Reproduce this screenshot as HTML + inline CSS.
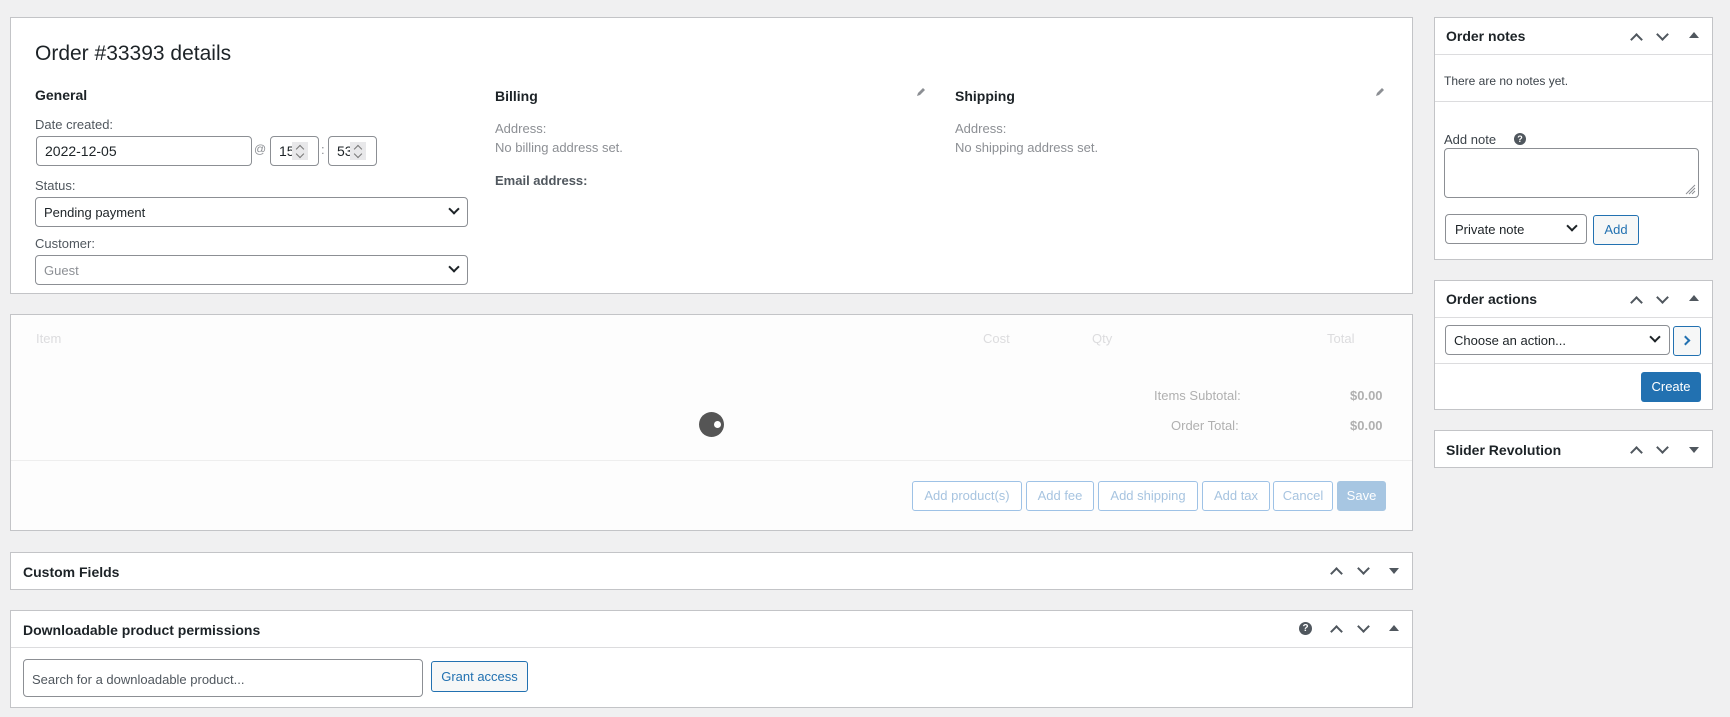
<!DOCTYPE html>
<html><head><meta charset="utf-8"><style>
*{box-sizing:border-box;margin:0;padding:0}
body{width:1730px;height:717px;background:#f0f0f1;font-family:"Liberation Sans",sans-serif;font-size:13px;color:#1d2327;position:relative;overflow:hidden}
.a{position:absolute}
.panel{position:absolute;background:#fff;border:1px solid #c3c4c7}
.t{position:absolute;white-space:nowrap;line-height:1}
.inp{position:absolute;border:1px solid #8c8f94;border-radius:4px;background:#fff}
.btn{position:absolute;border:1px solid #2271b1;border-radius:3px;background:#f6f7f7;color:#2271b1;text-align:center;font-size:13px}
.dbtn{position:absolute;border:1px solid #9ec2e6;border-radius:3px;background:#fff;color:#a7c4e0;text-align:center;font-size:13px;line-height:27px}
.chev{position:absolute;width:9px;height:9px;border-left:2px solid #50575e;border-top:2px solid #50575e}
.up{transform:rotate(45deg)}
.dn{transform:rotate(225deg)}
.tri-up{position:absolute;width:0;height:0;border-left:5px solid transparent;border-right:5px solid transparent;border-bottom:6px solid #50575e}
.tri-dn{position:absolute;width:0;height:0;border-left:5px solid transparent;border-right:5px solid transparent;border-top:6px solid #50575e}
.selchev{position:absolute;width:8px;height:8px;border-right:2px solid #1d2327;border-bottom:2px solid #1d2327;transform:rotate(45deg)}
.gray{color:#8c8f94}
.lbl{color:#50575e}
.spin{position:absolute;width:16px;height:18px;background:#e8e8ea}
.spin:before,.spin:after{content:"";position:absolute;left:5px;width:5px;height:5px;border-left:1px solid #777;border-top:1px solid #777}
.spin:before{top:4px;transform:rotate(45deg)}
.spin:after{top:9px;transform:rotate(225deg)}
</style></head><body>

<div class="panel" style="left:10px;top:17px;width:1403px;height:277px"></div>
<div class="t" style="left:35px;top:43px;font-size:21px;color:#1d2327">Order #33393 details</div>
<div class="t" style="left:35px;top:88px;font-size:14px;font-weight:bold">General</div>
<div class="t lbl" style="left:35px;top:118px">Date created:</div>
<div class="inp" style="left:36px;top:136px;width:216px;height:30px"></div>
<div class="t" style="left:45px;top:144px;font-size:14px">2022-12-05</div>
<div class="t gray" style="left:254px;top:143px;font-size:12px">@</div>
<div class="inp" style="left:270px;top:136px;width:49px;height:30px"></div>
<div class="t" style="left:279px;top:144px;font-size:14px">15</div>
<div class="spin" style="left:292px;top:142px"></div>
<div class="t gray" style="left:321px;top:143px">:</div>
<div class="inp" style="left:328px;top:136px;width:49px;height:30px"></div>
<div class="t" style="left:337px;top:144px;font-size:14px">53</div>
<div class="spin" style="left:350px;top:142px"></div>
<div class="t lbl" style="left:35px;top:179px">Status:</div>
<div class="inp" style="left:35px;top:197px;width:433px;height:30px"></div>
<div class="t" style="left:44px;top:206px;font-size:13px">Pending payment</div>
<div class="selchev" style="left:450px;top:205px"></div>
<div class="t lbl" style="left:35px;top:237px">Customer:</div>
<div class="inp" style="left:35px;top:255px;width:433px;height:30px"></div>
<div class="t gray" style="left:44px;top:264px">Guest</div>
<div class="selchev" style="left:450px;top:263px"></div>

<div class="t" style="left:495px;top:89px;font-size:14px;font-weight:bold">Billing</div>
<svg class="a" style="left:915px;top:86px" width="12" height="12" viewBox="0 0 12 12"><path d="M2 10l1-3 5-5 2 2-5 5z" fill="#8c8f94"/></svg>
<div class="t gray" style="left:495px;top:122px">Address:</div>
<div class="t gray" style="left:495px;top:141px">No billing address set.</div>
<div class="t lbl" style="left:495px;top:174px;font-weight:bold;font-size:13px">Email address:</div>
<div class="t" style="left:955px;top:89px;font-size:14px;font-weight:bold">Shipping</div>
<svg class="a" style="left:1374px;top:86px" width="12" height="12" viewBox="0 0 12 12"><path d="M2 10l1-3 5-5 2 2-5 5z" fill="#8c8f94"/></svg>
<div class="t gray" style="left:955px;top:122px">Address:</div>
<div class="t gray" style="left:955px;top:141px">No shipping address set.</div>

<div class="panel" style="left:10px;top:314px;width:1403px;height:217px;background:#fdfdfd"></div>
<div class="a" style="left:11px;top:460px;width:1401px;height:1px;background:#eee"></div>
<div class="t" style="left:36px;top:332px;color:#dcdcde">Item</div>
<div class="t" style="left:983px;top:332px;color:#dcdcde">Cost</div>
<div class="t" style="left:1092px;top:332px;color:#dcdcde">Qty</div>
<div class="t" style="left:1327px;top:332px;color:#dcdcde">Total</div>
<div class="t" style="left:1154px;top:389px;color:#b0b0b0">Items Subtotal:</div>
<div class="t" style="left:1350px;top:389px;color:#b0b0b0;font-weight:bold">$0.00</div>
<div class="t" style="left:1171px;top:419px;color:#b0b0b0">Order Total:</div>
<div class="t" style="left:1350px;top:419px;color:#b0b0b0;font-weight:bold">$0.00</div>
<div class="a" style="left:699px;top:412px;width:25px;height:25px;border-radius:50%;background:#555"></div>
<div class="a" style="left:714px;top:421px;width:7px;height:7px;border-radius:50%;background:#fff"></div>
<div class="dbtn" style="left:912px;top:481px;width:110px;height:30px">Add product(s)</div>
<div class="dbtn" style="left:1026px;top:481px;width:68px;height:30px">Add fee</div>
<div class="dbtn" style="left:1098px;top:481px;width:100px;height:30px">Add shipping</div>
<div class="dbtn" style="left:1202px;top:481px;width:68px;height:30px">Add tax</div>
<div class="dbtn" style="left:1273px;top:481px;width:60px;height:30px">Cancel</div>
<div class="dbtn" style="left:1337px;top:481px;width:49px;height:30px;background:#a7c6e2;border-color:#a7c6e2;color:#fff">Save</div>

<div class="panel" style="left:10px;top:552px;width:1403px;height:38px"></div>
<div class="t" style="left:23px;top:565px;font-size:14px;font-weight:bold">Custom Fields</div>
<div class="chev up" style="left:1332px;top:569px"></div>
<div class="chev dn" style="left:1359px;top:564px"></div>
<div class="tri-dn" style="left:1389px;top:568px"></div>

<div class="panel" style="left:10px;top:610px;width:1403px;height:98px"></div>
<div class="a" style="left:11px;top:647px;width:1401px;height:1px;background:#dcdcde"></div>
<div class="t" style="left:23px;top:623px;font-size:14px;font-weight:bold">Downloadable product permissions</div>
<div class="a" style="left:1299px;top:622px;width:13px;height:13px;border-radius:50%;background:#50575e;color:#fff;font-size:10px;font-weight:bold;text-align:center;line-height:13px">?</div>
<div class="chev up" style="left:1332px;top:627px"></div>
<div class="chev dn" style="left:1359px;top:622px"></div>
<div class="tri-up" style="left:1389px;top:625px"></div>
<div class="inp" style="left:23px;top:659px;width:400px;height:38px"></div>
<div class="t lbl" style="left:32px;top:673px">Search for a downloadable product...</div>
<div class="btn" style="left:431px;top:661px;width:97px;height:31px;line-height:29px">Grant access</div>

<div class="panel" style="left:1434px;top:17px;width:279px;height:243px"></div>
<div class="a" style="left:1435px;top:54px;width:277px;height:1px;background:#dcdcde"></div>
<div class="a" style="left:1435px;top:101px;width:277px;height:1px;background:#dcdcde"></div>
<div class="t" style="left:1446px;top:29px;font-size:14px;font-weight:bold">Order notes</div>
<div class="chev up" style="left:1632px;top:35px"></div>
<div class="chev dn" style="left:1658px;top:30px"></div>
<div class="tri-up" style="left:1689px;top:32px"></div>
<div class="t" style="left:1444px;top:75px;font-size:12px;color:#3c434a">There are no notes yet.</div>
<div class="t" style="left:1444px;top:133px;color:#3c434a">Add note</div>
<div class="a" style="left:1514px;top:133px;width:12px;height:12px;border-radius:50%;background:#50575e;color:#fff;font-size:9px;font-weight:bold;text-align:center;line-height:12px">?</div>
<div class="inp" style="left:1444px;top:148px;width:255px;height:50px"></div>
<svg class="a" style="left:1684px;top:183px" width="12" height="12"><path d="M11 2L2 11M11 5L5 11M11 8L8 11" stroke="#8c8f94" stroke-width="1"/></svg>
<div class="inp" style="left:1445px;top:214px;width:142px;height:30px"></div>
<div class="t" style="left:1455px;top:223px">Private note</div>
<div class="selchev" style="left:1568px;top:222px"></div>
<div class="btn" style="left:1593px;top:215px;width:46px;height:30px;line-height:28px">Add</div>

<div class="panel" style="left:1434px;top:280px;width:279px;height:130px"></div>
<div class="a" style="left:1435px;top:317px;width:277px;height:1px;background:#dcdcde"></div>
<div class="a" style="left:1435px;top:363px;width:277px;height:1px;background:#dcdcde"></div>
<div class="t" style="left:1446px;top:292px;font-size:14px;font-weight:bold">Order actions</div>
<div class="chev up" style="left:1632px;top:298px"></div>
<div class="chev dn" style="left:1658px;top:293px"></div>
<div class="tri-up" style="left:1689px;top:295px"></div>
<div class="inp" style="left:1445px;top:325px;width:225px;height:30px"></div>
<div class="t" style="left:1454px;top:334px">Choose an action...</div>
<div class="selchev" style="left:1651px;top:333px"></div>
<div class="btn" style="left:1673px;top:326px;width:28px;height:30px"></div>
<div class="a" style="left:1682px;top:337px;width:7px;height:7px;border-right:2px solid #2271b1;border-top:2px solid #2271b1;transform:rotate(45deg)"></div>
<div class="a" style="left:1641px;top:372px;width:60px;height:30px;background:#2271b1;border-radius:3px;color:#fff;text-align:center;line-height:30px">Create</div>

<div class="panel" style="left:1434px;top:430px;width:279px;height:38px"></div>
<div class="t" style="left:1446px;top:443px;font-size:14px;font-weight:bold">Slider Revolution</div>
<div class="chev up" style="left:1632px;top:448px"></div>
<div class="chev dn" style="left:1658px;top:443px"></div>
<div class="tri-dn" style="left:1689px;top:447px"></div>
</body></html>
